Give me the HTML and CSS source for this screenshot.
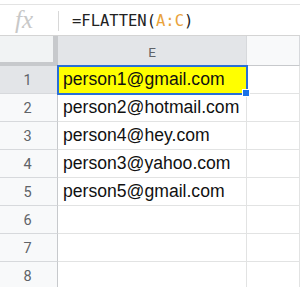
FILE: index.html
```html
<!DOCTYPE html>
<html>
<head>
<meta charset="utf-8">
<link rel="stylesheet" href="styles.css">
</head>
<body>
<div class="app">
  <div class="topline"></div>
  <div class="fbar">
    <div class="fx">fx</div>
    <div class="sep"></div>
    <div class="formula">=FLATTEN(<span class="ref">A:C</span>)</div>
  </div>
  <div class="grid">
    <div class="corner"></div>
    <div class="colhead active">E</div>
    <div class="colhead">&nbsp;</div>

    <div class="rowhead active">1</div>
    <div class="cell selected">person1@gmail.com<span class="handle"></span></div>
    <div class="cell"></div>

    <div class="rowhead">2</div>
    <div class="cell">person2@hotmail.com</div>
    <div class="cell"></div>

    <div class="rowhead">3</div>
    <div class="cell">person4@hey.com</div>
    <div class="cell"></div>

    <div class="rowhead">4</div>
    <div class="cell">person3@yahoo.com</div>
    <div class="cell"></div>

    <div class="rowhead">5</div>
    <div class="cell">person5@gmail.com</div>
    <div class="cell"></div>

    <div class="rowhead">6</div>
    <div class="cell"></div>
    <div class="cell"></div>

    <div class="rowhead">7</div>
    <div class="cell"></div>
    <div class="cell"></div>

    <div class="rowhead">8</div>
    <div class="cell"></div>
    <div class="cell"></div>
  </div>
</div>
</body>
</html>
```

FILE: styles.css
```css
html, body {
  margin: 0;
  padding: 0;
  background: #ffffff;
}
.app {
  width: 300px;
  height: 287px;
  overflow: hidden;
  font-family: "Liberation Sans", Arial, sans-serif;
}
.topline {
  height: 4px;
  border-bottom: 1px solid #e3e3e3;
}
.fbar {
  height: 31px;
  border-bottom: 1px solid #d4d4d4;
  display: flex;
  align-items: center;
  box-sizing: border-box;
}
.fx {
  width: 58px;
  padding-left: 15px;
  box-sizing: border-box;
  font-family: "Liberation Serif", serif;
  font-style: italic;
  font-size: 25px;
  color: #c8c8c8;
  line-height: 31px;
  margin-top: -2px;
}
.sep {
  width: 1px;
  height: 20px;
  background: #d8d8d8;
  margin-top: 1px;
}
.formula {
  margin-left: 13px;
  font-family: "DejaVu Sans Mono", monospace;
  font-size: 15.5px;
  color: #222;
  margin-top: 2px;
}
.ref {
  color: #e9a33c;
}
.grid {
  display: grid;
  grid-template-columns: 58px 189px 1fr;
  grid-template-rows: 30px repeat(8, 28px);
}
.corner {
  background: #f1f3f4;
  border-right: 5px solid #c7c9cc;
  border-bottom: 4px solid #c7c9cc;
  box-sizing: border-box;
}
.colhead {
  background: #f8f9fa;
  border-bottom: 1px solid #c7c9cc;
  border-right: 1px solid #d7d9dc;
  box-sizing: border-box;
  font-family: "Roboto", sans-serif;
  font-size: 13.5px;
  color: #5f6368;
  text-align: center;
  line-height: 30px;
  padding-top: 1px;
}
.colhead.active {
  background: #e3e5e8;
}
.rowhead {
  background: #f8f9fa;
  border-right: 1px solid #c7c9cc;
  border-bottom: 1px solid #d7d9dc;
  box-sizing: border-box;
  font-family: "Roboto", sans-serif;
  font-size: 14.5px;
  color: #5f6368;
  text-align: center;
  line-height: 29px;
  padding-right: 2px;
}
.rowhead.active {
  background: #e3e5e8;
}
.cell {
  border-right: 1px solid #e2e3e3;
  border-bottom: 1px solid #e2e3e3;
  box-sizing: border-box;
  font-size: 17.6px;
  color: #111;
  line-height: 27px;
  padding-left: 5px;
  white-space: nowrap;
  position: relative;
}
.cell.selected {
  background: #ffff00;
  outline: 2px solid #2a6fd6;
  outline-offset: -1px;
  z-index: 2;
}
.handle {
  position: absolute;
  right: -4px;
  bottom: -4px;
  width: 6px;
  height: 6px;
  background: #1a73e8;
  border: 1px solid #ffffff;
}
```
